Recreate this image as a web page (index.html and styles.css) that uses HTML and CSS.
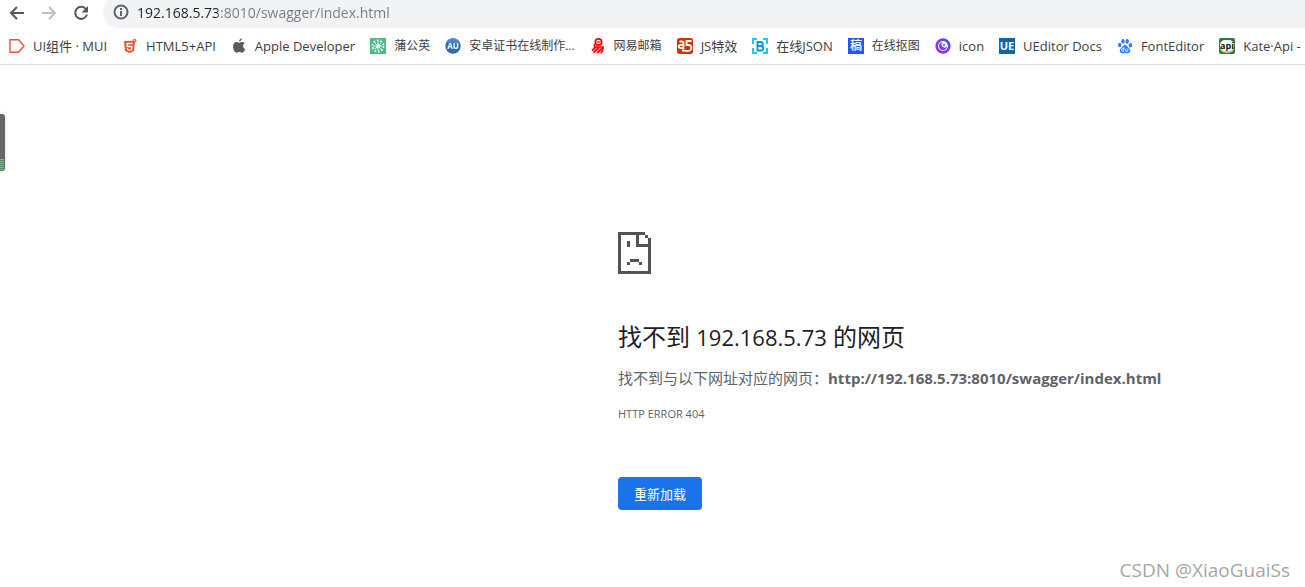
FILE: index.html
```html
<!DOCTYPE html>
<html lang="zh-CN">
<head>
  <meta charset="UTF-8">
  <meta name="viewport" content="width=device-width, initial-scale=1.0">
  <title>192.168.5.73</title>
  <link rel="stylesheet" href="styles.css">
</head>
<body>
  <header class="browser">
    <div class="toolbar">
      <button class="nav-btn" type="button" aria-label="后退">
        <svg viewBox="0 0 16 16"><path d="M15 8H2M8 2L2 8l6 6"/></svg>
      </button>
      <button class="nav-btn nav-btn-off" type="button" aria-label="前进" disabled>
        <svg viewBox="0 0 16 16"><path d="M1 8h13M8 2l6 6-6 6"/></svg>
      </button>
      <button class="nav-btn" type="button" aria-label="刷新">
        <svg viewBox="0 0 16 16"><path d="M13 4.200A6 6 0 1 0 14 9.500"/><path class="fill" d="M15 1v6.500H8.500z"/></svg>
      </button>
      <div class="omnibox">
        <svg class="info" viewBox="0 0 16 16"><circle cx="8" cy="8" r="6.500"/><path d="M8 7v5M8 4v2"/></svg>
        <input class="address" type="text" aria-label="地址" value="192.168.5.73:8010/swagger/index.html" spellcheck="false">
      </div>
    </div>

    <nav class="bookmarks">
      <a class="bookmark" href="#">
        <svg viewBox="0 0 16 16"><path d="M1 1.700h8.500L15 8l-5.500 6.300H1z" fill="none" stroke="#e8562a" stroke-width="1.400"/></svg>
        <span>UI组件 · MUI</span>
      </a>
      <a class="bookmark" href="#">
        <svg viewBox="0 0 16 16"><path d="M2 3h11l-1 10-4.500 2L3 13z" fill="#e5532d"/><path d="M10.500 5.500H5l.3 3h4.600l-.4 3-2 .8-2-.8-.1-1.200" fill="none" stroke="#fff" stroke-width="1.300"/><circle cx="12.500" cy="2.800" r="1.500" fill="#f4a48e" stroke="#d8553a"/></svg>
        <span>HTML5+API</span>
      </a>
      <a class="bookmark" href="#">
        <svg viewBox="0 0 16 16"><path d="M8 4.700c1-.1 1.800-.8 3-.8 1.200 0 2.100.5 2.700 1.400-2.400 1.500-2.100 4.600.5 5.600-.6 1.700-1.800 3.800-3.200 3.800-1 0-1.500-.6-2.700-.6s-1.700.6-2.700.6C3.700 14.700 2 11.300 2 8.600 2 5.700 3.700 4 5.400 4c1.100 0 1.800.7 2.600.7z" fill="#5b5b5b"/><path d="M8 3.600C7.900 1.900 9.300.4 10.800.2 11 2 9.600 3.600 8 3.600z" fill="#5b5b5b"/></svg>
        <span>Apple Developer</span>
      </a>
      <a class="bookmark bookmark-zh" href="#">
        <svg viewBox="0 0 16 16"><path d="M0 0h16v16H0z" fill="#4fba8c"/><circle cx="8" cy="8" r="5.500" fill="none" stroke="#fff" stroke-width="1.800" stroke-dasharray="1.700 1.750"/><path d="M8 4v8M4 8h8M5.200 5.200l5.600 5.600M10.800 5.200l-5.600 5.600" stroke="#e8fff5"/><circle cx="8" cy="8" r="1.700" fill="#fff"/></svg>
        <span>蒲公英</span>
      </a>
      <a class="bookmark bookmark-zh" href="#">
        <svg viewBox="0 0 16 16"><circle cx="8" cy="8" r="7.700" fill="#2e68b5"/><path d="M1 5a7.700 7.700 0 0 1 14 0z" fill="#4885cb"/><text x="8" y="11" font-size="8" fill="#fff">AU</text></svg>
        <span>安卓证书在线制作...</span>
      </a>
      <a class="bookmark bookmark-zh" href="#">
        <svg viewBox="0 0 16 16"><g fill="none" stroke="#f00" stroke-width="1.700"><circle cx="8.500" cy="4" r="3.200"/><path d="M6.500 4h4" stroke-width="1.200"/><path d="M4.500 6v3h8.500c0 3-.5 5-2.500 6M6 9L2 12.500M9 9.500l-5.500 5M12 10.500L7 15"/></g></svg>
        <span>网易邮箱</span>
      </a>
      <a class="bookmark" href="#">
        <svg viewBox="0 0 16 16"><rect width="16" height="16" rx="2.500" fill="#cf3308"/><path d="M2.500 3.500h2.300c1.400 0 1.700.8 1.700 2V10H4C1 10 1 6.800 4 6.800h2.500M14.500 3h-5v4h2c4 0 3.500 6-.5 6-2 0-4.500-.5-6-.5" fill="none" stroke="#fff" stroke-width="1.800"/></svg>
        <span>JS特效</span>
      </a>
      <a class="bookmark" href="#">
        <svg viewBox="0 0 16 16"><path d="M5 1H1v5M11 1h4v5M1 10v5h4M15 10v5h-4" fill="none" stroke="#19c8f8" stroke-width="2"/><path d="M5.500 4h3c3 0 3 4 0 4h-3zM5.500 8h3.300c3.400 0 3.400 4.500 0 4.500H5.500z" fill="none" stroke="#168ff0" stroke-width="2"/></svg>
        <span>在线JSON</span>
      </a>
      <a class="bookmark bookmark-zh" href="#">
        <svg viewBox="0 0 16 16"><path d="M0 0h16v16H0z" fill="#2456f3"/><text class="thin" x="8" y="12" font-size="12" fill="#fff">稿</text></svg>
        <span>在线抠图</span>
      </a>
      <a class="bookmark" href="#">
        <svg viewBox="0 0 16 16">
          <defs><linearGradient id="ring" x1="0" y1="1" x2="1" y2="0"><stop offset="0" stop-color="#c11cff"/><stop offset="1" stop-color="#3559f2"/></linearGradient></defs>
          <circle cx="8" cy="8" r="6.300" fill="#fff" stroke="url(#ring)" stroke-width="2.700"/><path d="M7.500 4a4 4 0 1 0 4.500 4.500A3 3 0 0 1 7.500 4z" fill="#6747f5"/><circle cx="9" cy="7" r="1.200" fill="#8d6bff"/>
        </svg>
        <span>icon</span>
      </a>
      <a class="bookmark" href="#">
        <svg viewBox="0 0 16 16"><path d="M0 0h16v16H0z" fill="#0b68a8"/><text x="8" y="12" font-size="11" fill="#fff">UE</text></svg>
        <span>UEditor Docs</span>
      </a>
      <a class="bookmark" href="#">
        <svg viewBox="0 0 16 16" fill="#2f7df6"><ellipse cx="2.700" cy="7" rx="1.700" ry="2.200"/><ellipse cx="6" cy="3.300" rx="1.700" ry="2.400"/><ellipse cx="10.200" cy="3.300" rx="1.700" ry="2.400"/><ellipse cx="13.400" cy="7.200" rx="1.700" ry="2.200"/><path d="M8 7c2 0 2.500 2 4 3.200 2.300 2 1.200 5-1.500 5-1 0-1.500-.3-2.500-.3s-1.500.3-2.500.3c-2.700 0-3.800-3-1.500-5C5.500 9 6 7 8 7z"/><path d="M6.800 10.500H6a1.200 1.200 0 0 0 0 2.800h.8V9M8.800 10.500v2.800h2v-2.800" fill="none" stroke="#fff" stroke-width=".8"/></svg>
        <span>FontEditor</span>
      </a>
      <a class="bookmark" href="#">
        <svg viewBox="0 0 16 16"><rect width="16" height="16" rx="2" fill="#297a36"/><path d="M1 11c1 3 4 4 7 4s6-1 7-4" fill="#b2d681"/><rect x="1" y="2" width="14" height="11" rx="5" fill="#fff"/><text x="8" y="11" font-size="9" fill="#111">api</text></svg>
        <span>Kate·Api -</span>
      </a>
    </nav>
  </header>

  <div class="side-handle"><span class="meter"></span></div>

  <main class="error">
    <svg class="error-icon" viewBox="0 0 11 14" shape-rendering="crispEdges"><path d="M0 0h9v1H0zM0 1h1v13H0zM1 13h10v1H1zM10 2h1v11h-1zM9 1h1v1H9zM6 1h1v4H6zM7 4h3v1H7zM3 3h1v2H3zM4 9h3v1H4zM3 10h1v1H3zM7 10h1v1H7z"/></svg>
    <h1>找不到 <span>192.168.5.73</span> 的网页</h1>
    <p class="summary">找不到与以下网址对应的网页：<strong>http://192.168.5.73:8010/swagger/index.html</strong></p>
    <p class="code">HTTP ERROR 404</p>
    <button class="reload" type="button">重新加载</button>
  </main>

  <div class="watermark">CSDN @XiaoGuaiSs</div>
</body>
</html>
```
FILE: styles.css
```css
:root {
  --text: #202124;
  --muted: #5f6368;
  --blue: #1a73e8;
}

* {
  box-sizing: border-box;
}

body {
  margin: 0;
  min-height: 100vh;
  position: relative;
  overflow: hidden;
  background: #fff;
  color: var(--muted);
  font-family: "Open Sans", "Noto Sans CJK SC", sans-serif;
}

.browser {
  border-bottom: 1px solid #dadce0;
}

/* toolbar */
.toolbar {
  display: flex;
  align-items: center;
  gap: 16px;
  height: 28px;
  padding-left: 9px;
  overflow: hidden;
}

.nav-btn {
  width: 16px;
  height: 16px;
  margin-bottom: 2px;
  padding: 0;
  border: none;
  background: none;
}

.nav-btn svg {
  display: block;
  fill: none;
  stroke: #54585d;
  stroke-width: 2;
}

.nav-btn .fill {
  fill: #54585d;
  stroke: none;
}

.nav-btn-off svg {
  stroke: #bcbec1;
}

.omnibox {
  flex: 1;
  align-self: flex-end;
  display: flex;
  align-items: center;
  gap: 8px;
  height: 32px;
  margin-left: -2px;
  padding-left: 10px;
  border-radius: 16px 0 0 16px;
  background: #f1f3f4;
}

.info {
  width: 16px;
  height: 16px;
  fill: none;
  stroke: var(--muted);
  stroke-width: 2;
}

.address {
  flex: 1;
  padding: 0;
  border: none;
  outline: none;
  font: 14px "Open Sans", sans-serif;
  /* host is dark, the rest of the address is grey */
  background: linear-gradient(90deg, var(--text) 81px, #777b80 81px);
  -webkit-background-clip: text;
  background-clip: text;
  color: transparent;
}

/* bookmarks bar */
.bookmarks {
  display: flex;
  align-items: center;
  gap: 15px;
  height: 36px;
  padding-left: 9px;
  white-space: nowrap;
}

.bookmark {
  display: flex;
  flex: none;
  align-items: center;
  gap: 8px;
  color: #3c4043;
  font-size: 13px;
  line-height: 16px;
  text-decoration: none;
}

.bookmark-zh {
  font-size: 12px;
}

.bookmark svg {
  width: 16px;
  height: 16px;
}

.bookmark text {
  font-weight: bold;
  text-anchor: middle;
}

.bookmark .thin {
  font-weight: 500;
}

/* handle on the left edge */
.side-handle {
  position: absolute;
  top: 114px;
  left: 0;
  display: flex;
  align-items: flex-end;
  width: 5px;
  height: 57px;
  padding-bottom: 1px;
  border-radius: 0 3px 3px 0;
  background: #666;
  box-shadow: 0 0 4px rgba(0, 0, 0, 0.15);
}

.meter {
  width: 4px;
  height: 11px;
  background: repeating-linear-gradient(#3fe06a 0 1px, #4c8a5b 1px 2px);
}

/* error page */
.error {
  max-width: 600px;
  margin: 167px 87px 0 auto;
}

.error-icon {
  display: block;
  width: 33px;
  height: 42px;
  fill: #535353;
}

h1 {
  margin: 45px 0 0;
  color: var(--text);
  font-size: 24px;
  font-weight: 400;
  line-height: 36px;
}

h1 span {
  font-size: 22px;
  font-weight: 500;
}

.summary {
  margin: 11px 0 0;
  font-size: 15px;
  line-height: 24px;
  white-space: nowrap;
}

.code {
  margin: 15px 0 0;
  font-size: 11px;
  line-height: 18px;
}

.reload {
  margin-top: 54px;
  height: 33px;
  padding: 0 16px;
  border: none;
  border-radius: 4px;
  background: var(--blue);
  color: #fff;
  font: 400 13px "Open Sans", "Noto Sans CJK SC", sans-serif;
}

.watermark {
  position: absolute;
  right: 15px;
  bottom: 5px;
  color: #a6a6a6;
  font-size: 19px;
  line-height: 24px;
}
```
